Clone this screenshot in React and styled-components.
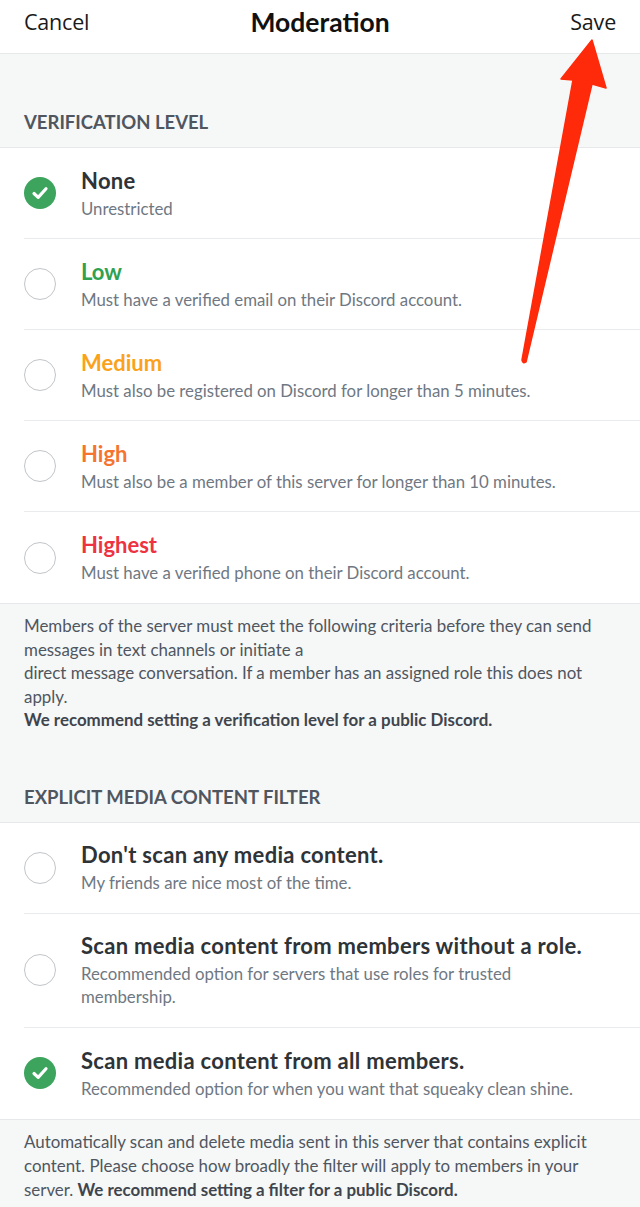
import React from 'react';
import styled, { createGlobalStyle } from 'styled-components';

const GlobalStyle = createGlobalStyle`
  html, body {
    margin: 0;
    padding: 0;
    background: #f6f7f7;
  }
  body {
    font-family: Lato, "Open Sans", sans-serif;
    -webkit-font-smoothing: antialiased;
  }
`;

const Page = styled.div`
  position: relative;
  width: 640px;
  min-height: 1207px;
  background: #f6f7f7;
  overflow: hidden;
`;

const Header = styled.div`
  display: grid;
  grid-template-columns: 1fr auto 1fr;
  align-items: center;
  height: 54px;
  padding: 0 24px;
  background: #ffffff;
  border-bottom: 1px solid #e6e8e9;
  box-sizing: border-box;
`;

const NavButton = styled.div`
  font-family: "Open Sans", sans-serif;
  font-size: 21.5px;
  color: #1a1a1a;
  margin-top: -10px;
  letter-spacing: -0.2px;
  justify-self: ${(p) => (p.$right ? 'end' : 'start')};
`;

const Title = styled.div`
  font-family: Lato, sans-serif;
  font-weight: 700;
  font-size: 26.5px;
  color: #111;
  margin-top: -9px;
`;

const SectionHeader = styled.div`
  padding: ${(p) => p.$top}px 24px 13px;
  font-size: 18.5px;
  font-weight: 700;
  color: #4f5660;
  line-height: 24px;
  border-bottom: 1px solid #e6e8e9;
`;

const List = styled.div`
  background: #ffffff;
  border-bottom: 1px solid #e6e8e9;
`;

const Row = styled.div`
  display: flex;
  min-height: ${(p) => p.$height}px;
  padding-left: 24px;
  box-sizing: border-box;
`;

const Inner = styled.div`
  flex: 1;
  display: flex;
  align-items: center;
  border-bottom: ${(p) => (p.$last ? 'none' : '1px solid #e9ebec')};
`;

const Radio = styled.div`
  flex: none;
  width: 32px;
  height: 32px;
  box-sizing: border-box;
  border-radius: 50%;
  border: ${(p) => (p.$checked ? 'none' : '1.5px solid #c2c5c8')};
  background: ${(p) => (p.$checked ? '#3ca45c' : 'transparent')};
  display: flex;
  align-items: center;
  justify-content: center;
`;

const TextBlock = styled.div`
  margin-left: 25px;
  padding-right: 40px;
  display: flex;
  flex-direction: column;
`;

const OptionTitle = styled.div`
  font-size: 22px;
  font-weight: 700;
  line-height: 27px;
  letter-spacing: ${(p) => (p.$color ? '0' : '0.3px')};
  color: ${(p) => p.$color || '#2e3338'};
`;

const OptionDesc = styled.div`
  font-size: 16.8px;
  line-height: 23px;
  color: #6f7882;
  margin-top: 3px;
`;

const Info = styled.div`
  padding: ${(p) => p.$top}px 24px ${(p) => p.$bottom}px;
  font-size: 16.9px;
  line-height: ${(p) => p.$lh}px;
  color: #4f5660;

  strong {
    font-weight: 700;
    color: #3f454d;
  }
`;

const ArrowLayer = styled.svg`
  position: absolute;
  left: 0;
  top: 0;
  pointer-events: none;
`;

const Check = () => (
  <svg width="20" height="20" viewBox="0 0 20 20">
    <path d="M4 10.5 L8.2 14.4 L16 5.8" fill="none" stroke="#fff" strokeWidth="3.2" strokeLinecap="round" strokeLinejoin="round" />
  </svg>
);

const levels = [
  { title: 'None', desc: 'Unrestricted', checked: true },
  { title: 'Low', desc: 'Must have a verified email on their Discord account.', color: '#2fa14f' },
  { title: 'Medium', desc: 'Must also be registered on Discord for longer than 5 minutes.', color: '#faa21b' },
  { title: 'High', desc: 'Must also be a member of this server for longer than 10 minutes.', color: '#f57430' },
  { title: 'Highest', desc: 'Must have a verified phone on their Discord account.', color: '#ed3341' },
];

const filters = [
  { title: "Don't scan any media content.", desc: 'My friends are nice most of the time.', height: 91 },
  {
    title: 'Scan media content from members without a role.',
    desc: 'Recommended option for servers that use roles for trusted membership.',
    height: 114,
  },
  {
    title: 'Scan media content from all members.',
    desc: 'Recommended option for when you want that squeaky clean shine.',
    height: 91,
    checked: true,
  },
];

function Option({ item, last }) {
  return (
    <Row $height={item.height || 91}>
      <Inner $last={last}>
        <Radio $checked={item.checked}>{item.checked && <Check />}</Radio>
        <TextBlock>
          <OptionTitle $color={item.color}>{item.title}</OptionTitle>
          <OptionDesc>{item.desc}</OptionDesc>
        </TextBlock>
      </Inner>
    </Row>
  );
}

export default function App() {
  return (
    <Page>
      <GlobalStyle />
      <Header>
        <NavButton>Cancel</NavButton>
        <Title>Moderation</Title>
        <NavButton $right>Save</NavButton>
      </Header>

      <SectionHeader $top={56}>VERIFICATION LEVEL</SectionHeader>
      <List>
        {levels.map((l, i) => (
          <Option key={l.title} item={l} last={i === levels.length - 1} />
        ))}
      </List>
      <Info $top={10} $bottom={0} $lh={23.6}>
        Members of the server must meet the following criteria before they can send messages in text channels or initiate a
        <br />
        direct message conversation. If a member has an assigned role this does not apply.
        <br />
        <strong>We recommend setting a verification level for a public Discord.</strong>
      </Info>

      <SectionHeader $top={53}>EXPLICIT MEDIA CONTENT FILTER</SectionHeader>
      <List>
        {filters.map((f, i) => (
          <Option key={f.title} item={f} last={i === filters.length - 1} />
        ))}
      </List>
      <Info $top={10} $bottom={12} $lh={24}>
        Automatically scan and delete media sent in this server that contains explicit content. Please choose how broadly
        the filter will apply to members in your server. <strong>We recommend setting a filter for a public Discord.</strong>
      </Info>

      <ArrowLayer width="640" height="400" viewBox="0 0 640 400">
        <path
          d="M592 40 L606 88 L592 84 L526 362 Q523 364 522 360 L573 80 L561 79 Z"
          fill="#fe2a0a"
          stroke="#fe2a0a"
          strokeWidth="1.5"
          strokeLinejoin="round"
        />
      </ArrowLayer>
    </Page>
  );
}
